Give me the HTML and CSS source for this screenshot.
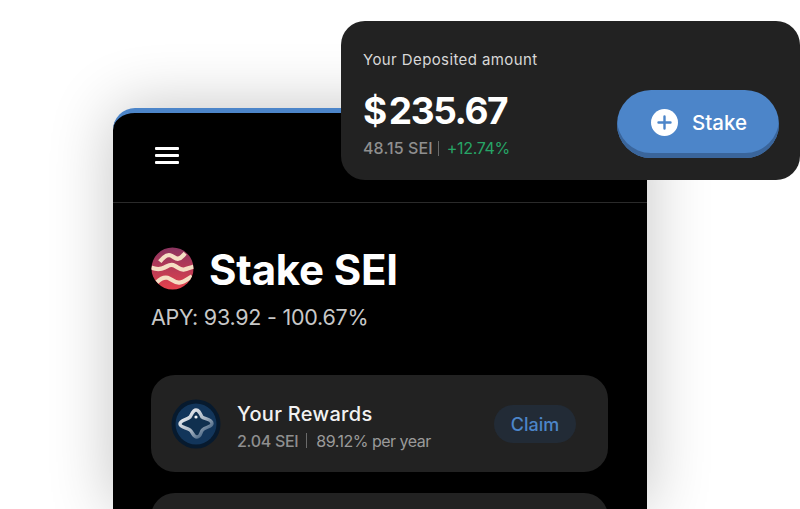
FILE: index.html
```html
<!DOCTYPE html>
<html lang="en">
<head>
<meta charset="utf-8">
<title>Stake SEI</title>
<link rel="stylesheet" href="styles.css">
</head>
<body>
<main class="phone">
  <header class="topbar">
    <button class="menu" aria-label="Menu"><span></span><span></span><span></span></button>
  </header>
  <section class="content">
    <div class="heading">
      <svg class="sei" viewBox="0 0 44 44" aria-hidden="true">
        <defs>
          <linearGradient id="seiGrad" x1="0" y1="0" x2="0" y2="1">
            <stop offset="0" stop-color="#8a3460"/>
            <stop offset="1" stop-color="#e5424c"/>
          </linearGradient>
          <clipPath id="seiClip"><circle cx="22" cy="22" r="21.5"/></clipPath>
        </defs>
        <circle cx="22" cy="22" r="21.5" fill="url(#seiGrad)"/>
        <g clip-path="url(#seiClip)" fill="none" stroke="#f5dfc4" stroke-width="4.400">
          <path d="M9 15C13 10 16 7.500 19.500 8.500S25 12.500 28 12 32 9.500 35 6.500"/>
          <path d="M0 21C5 23 10 23 14 21S20 17 24 19 30 24 34 23 40 21 44 20"/>
          <path d="M6 36C9 33 13 30.500 17 31.500S24 37 29 36.500 37 33 42 30"/>
        </g>
      </svg>
      <h1>Stake SEI</h1>
    </div>
    <p class="apy">APY: 93.92 - 100.67%</p>
    <article class="card rewards">
      <svg class="star" viewBox="0 0 50 50" aria-hidden="true">
        <defs>
          <linearGradient id="starGrad" x1="0.1" y1="0.1" x2="0.9" y2="0.9">
            <stop offset="0" stop-color="#f0f1f3"/>
            <stop offset="0.55" stop-color="#a9b6c4"/>
            <stop offset="1" stop-color="#3b5a7a"/>
          </linearGradient>
        </defs>
        <circle cx="25" cy="25" r="24.500" fill="#071a2e"/>
        <circle cx="25" cy="25" r="20.500" fill="#12355a"/>
        <path d="M25 11C28 11 29 14 31 18 33 20 41 20 41 24.500 41 28 34 28 31.500 31 29.500 33 30 38 26 38 22 38 22 33.500 19 31 16 28.500 9 28.500 9 25 9 21 16 21 19 18 21 15 22 11 25 11Z" fill="#10304f" stroke="url(#starGrad)" stroke-width="3.400" stroke-linejoin="round"/>
        <circle cx="25" cy="18" r="1.600" fill="#f2f4f6"/>
      </svg>
      <div class="card-text">
        <h2>Your Rewards</h2>
        <p class="meta"><span>2.04 SEI</span><i></i><span class="light">89.12% per year</span></p>
      </div>
      <button class="claim">Claim</button>
    </article>
    <article class="card"></article>
  </section>
</main>
<aside class="deposit">
  <div class="deposit-info">
    <p class="deposit-label">Your Deposited amount</p>
    <p class="amount"><span class="dollar">$</span>235.67</p>
    <p class="meta deposit-meta"><span>48.15 SEI</span><i></i><span class="gain">+12.74%</span></p>
  </div>
  <button class="stake">
    <svg class="plus" viewBox="0 0 27 27" aria-hidden="true">
      <circle cx="13.500" cy="13.500" r="13.500" fill="#fff"/>
      <path d="M13.500 7.500v12M7.500 13.500h12" stroke="#4c85c9" stroke-width="2.400" stroke-linecap="round"/>
    </svg>
    <span>Stake</span>
  </button>
</aside>
</body>
</html>
```

FILE: styles.css
```css
* { box-sizing: border-box; }
html, body { margin: 0; height: 509px; }
body {
  position: relative;
  overflow: hidden;
  background: #fff;
  font-family: Inter, "Noto Sans", "Liberation Sans", sans-serif;
  color: #fff;
  padding: 108px 0 0 113px;
}
p, h1, h2 { margin: 0; }
button { border: 0; font: inherit; padding: 0; }

.phone {
  width: 534px;
  height: 401px;
  overflow: hidden;
  background: #000;
  border-top: 5px solid #4c85c9;
  border-radius: 22px 22px 0 0;
  box-shadow: 0 0 64px rgba(0, 0, 0, .24);
}
.topbar {
  height: 90px;
  padding: 34px 0 0 42px;
  border-bottom: 1px solid #2a2a2a;
}
.menu {
  display: flex;
  flex-direction: column;
  gap: 4.500px;
  width: 24px;
  background: none;
}
.menu span {
  display: block;
  height: 2.500px;
  background: #fff;
  border-radius: 1px;
}
.content { padding: 43px 39px 0 38px; }
.heading { display: flex; align-items: center; gap: 15px; }
.sei { width: 43px; height: 43px; flex: none; margin-top: -3px; }
h1 { font-size: 42px; line-height: 48px; font-weight: 700; letter-spacing: -.2px; }
.apy { margin-top: 9px; font-size: 21.500px; line-height: 28px; color: #c8c8c8; letter-spacing: -.25px; }
.card {
  height: 97px;
  background: #222;
  border-radius: 24px;
  margin-top: 21px;
}
.rewards {
  display: flex;
  align-items: center;
  margin-top: 44px;
  padding: 0 32px 0 21px;
}
.star { width: 50px; height: 50px; flex: none; margin-left: -1px; }
.card-text { flex: 1; margin-left: 16px; padding-top: 5px; }
h2 { font-size: 20px; line-height: 26px; font-weight: 500; color: #f2f2f2; letter-spacing: .3px; }
.meta {
  display: flex;
  align-items: center;
  font-size: 16px;
  line-height: 22px;
  font-weight: 500;
  color: #8f8f8f;
  letter-spacing: -.3px;
}
.card-text .meta { margin-top: 3px; }
.meta i { width: 1px; height: 15px; background: #6a6a6a; margin: 0 8px; }
.meta .light { font-weight: 400; color: #9a9a9a; letter-spacing: -.5px; margin-left: 1px; }
.claim {
  width: 82px;
  height: 38px;
  padding-top: 1px;
  border-radius: 19px;
  background: #222b36;
  color: #4c85c9;
  font-size: 18px;
  font-weight: 500;
}
.deposit {
  position: absolute;
  left: 341px;
  top: 21px;
  width: 459px;
  height: 159px;
  display: flex;
  justify-content: space-between;
  background: #222;
  border-radius: 24px;
  padding: 29px 21px 0 22px;
}
.deposit-label { font-size: 15px; line-height: 20px; color: #d8d8d8; letter-spacing: .4px; }
.amount { margin-top: 18px; font-size: 37px; line-height: 46px; font-weight: 700; letter-spacing: -1.400px; }
.dollar { margin-right: 3px; }
.deposit-meta { margin-top: 3px; letter-spacing: .1px; }
.deposit-meta i { margin: 0 8px 0 5px; }
.gain { color: #27a567; font-weight: 400; letter-spacing: -.3px; }
.stake {
  align-self: flex-start;
  margin-top: 40px;
  width: 162px;
  height: 68px;
  display: flex;
  align-items: center;
  gap: 14px;
  padding: 0 0 4px 34px;
  border-radius: 34px;
  background: #4c85c9;
  box-shadow: inset 0 -5px 0 #3a659b;
  color: #fff;
  font-size: 20.500px;
  font-weight: 500;
}
.plus { width: 27px; height: 27px; flex: none; }
```
